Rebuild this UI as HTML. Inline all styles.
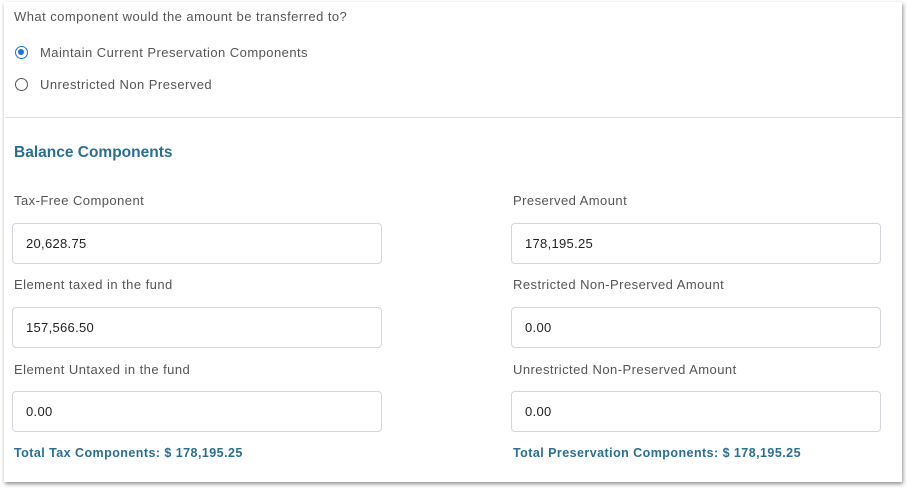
<!DOCTYPE html>
<html><head><style>
body{margin:0;width:910px;height:491px;background:#fff;font-family:"Liberation Sans",sans-serif;position:relative;overflow:hidden}
.card{position:absolute;left:4px;top:2px;width:898px;height:480px;background:#fff;box-shadow:1px 2px 4px rgba(0,0,0,.45)}
.t{position:absolute;font-size:13px;letter-spacing:0.45px;color:#555;white-space:nowrap}
.in{position:absolute;width:370px;height:41px;border:1px solid #d3d6dc;border-radius:4px;box-sizing:border-box;font-size:13px;letter-spacing:0.3px;color:#222;padding:12px 0 0 13px}
.tot{position:absolute;font-size:12.5px;letter-spacing:0.45px;font-weight:bold;color:#2a6f93;white-space:nowrap}
.r{position:absolute;width:13px;height:13px;border-radius:50%;box-sizing:border-box}
</style></head><body>
<div class="card"></div>
<div class="t" style="left:14px;top:9px">What component would the amount be transferred to?</div>
<div class="r" style="left:15px;top:46px;border:1.5px solid #1a73e8"><div style="position:absolute;left:2px;top:2px;width:6px;height:6px;border-radius:50%;background:#1a73e8"></div></div>
<div class="t" style="left:40px;top:45px">Maintain Current Preservation Components</div>
<div class="r" style="left:15px;top:78px;border:1px solid #555"></div>
<div class="t" style="left:40px;top:77px">Unrestricted Non Preserved</div>
<div style="position:absolute;left:5px;top:117px;width:897px;height:1px;background:#ddd"></div>
<div class="t" style="left:14px;top:144px;font-size:15.5px;letter-spacing:0;font-weight:bold;color:#2a6f93">Balance Components</div>
<div class="t" style="left:14px;top:193px">Tax-Free Component</div>
<div class="t" style="left:513px;top:193px">Preserved Amount</div>
<div class="in" style="left:12px;top:223px">20,628.75</div>
<div class="in" style="left:511px;top:223px">178,195.25</div>
<div class="t" style="left:14px;top:277px">Element taxed in the fund</div>
<div class="t" style="left:513px;top:277px">Restricted Non-Preserved Amount</div>
<div class="in" style="left:12px;top:307px">157,566.50</div>
<div class="in" style="left:511px;top:307px">0.00</div>
<div class="t" style="left:14px;top:362px">Element Untaxed in the fund</div>
<div class="t" style="left:513px;top:362px">Unrestricted Non-Preserved Amount</div>
<div class="in" style="left:12px;top:391px">0.00</div>
<div class="in" style="left:511px;top:391px">0.00</div>
<div class="tot" style="left:14px;top:446px">Total Tax Components: $ 178,195.25</div>
<div class="tot" style="left:513px;top:446px">Total Preservation Components: $ 178,195.25</div>
</body></html>
